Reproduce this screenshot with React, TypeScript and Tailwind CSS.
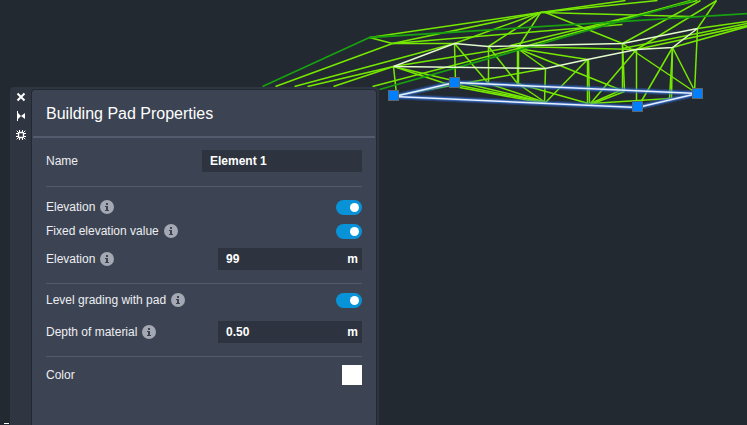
import React, { useState } from 'react';

const FONT = "font-['Liberation_Sans',Arial,sans-serif]";

type Line = [number, number, number, number];

const LIME_LINES: Line[] = [
  // long slopes running off to the left
  [275, 86, 392, 43],
  [294, 86, 454, 43],
  [307, 86, 393, 66],
  [333, 86, 393, 66],
  [372, 86, 517, 48],
  [369, 37, 392, 43],
  [369, 37, 540, 12],
  [392, 43, 540, 12],
  [392, 43, 454, 43],
  [392, 43, 622, 24],
  [454, 43, 540, 12],
  [488, 46, 540, 12],
  [517, 48, 540, 12],
  [393, 66, 517, 46],
  // top ridge
  [540, 12, 625, 0],
  [540, 12, 657, 0],
  [540, 12, 690, 16],
  [545, 12, 622, 43],
  [510, 45, 697, 0],
  [517, 48, 690, 0],
  [622, 43, 700, 0],
  [636, 49, 716, 0],
  [697, 28, 716, 0],
  [697, 28, 747, 21],
  [622, 48, 747, 23],
  [636, 49, 747, 25],
  [672, 47, 747, 26],
  [517, 46, 636, 49],
  // slopes down to the pad
  [393, 66, 396, 94],
  [393, 66, 545, 102],
  [393, 66, 454, 86],
  [454, 84, 545, 102],
  [454, 86, 545, 103],
  [395, 95, 545, 68],
  [454, 43, 455, 82],
  [454, 43, 488, 83],
  [488, 46, 488, 83],
  [488, 46, 517, 83],
  [517, 48, 517, 83],
  [518, 48, 518, 83],
  [488, 83, 545, 102],
  [517, 83, 545, 102],
  [517, 83, 588, 103],
  [517, 48, 545, 68],
  [517, 48, 587, 59],
  [517, 48, 624, 91],
  [545, 68, 544, 102],
  [587, 59, 545, 102],
  [587, 59, 587, 103],
  [588, 59, 589, 103],
  [636, 49, 590, 103],
  [622, 43, 622, 90],
  [622, 43, 624, 90],
  [622, 43, 695, 92],
  [636, 49, 636, 104],
  [672, 47, 669, 98],
  [672, 47, 671, 98],
  [672, 47, 639, 104],
  [672, 47, 695, 92],
  [697, 28, 694, 92],
  [590, 103, 622, 89],
  [590, 104, 624, 91],
  [590, 103, 670, 98],
];

const GREEN_LINES: Line[] = [
  [262, 86, 369, 37],
  [369, 37, 747, 13],
  [379, 89, 693, 0],
];

const GRIPS = [
  { x: 393, y: 95 },
  { x: 454, y: 82 },
  { x: 697, y: 93 },
  { x: 637, y: 106 },
];

const PAD_POINTS = '394,96 454,82 697,93 637,107';

const Wireframe: React.FC = () => (
  <svg
    className="absolute left-0 top-0"
    width="747"
    height="130"
    viewBox="0 0 747 130"
    fill="none"
    aria-hidden="true"
  >
    <g transform="translate(0.5 0.5)">
      <g stroke="#76e900" strokeWidth="1.5">
        {LIME_LINES.map(([x1, y1, x2, y2], i) => (
          <line key={i} x1={x1} y1={y1} x2={x2} y2={y2} />
        ))}
      </g>
      <g stroke="#18a010" strokeWidth="1.8">
        {GREEN_LINES.map(([x1, y1, x2, y2], i) => (
          <line key={i} x1={x1} y1={y1} x2={x2} y2={y2} />
        ))}
      </g>
      <polygon
        points="393,66 454,43 488,46 622,43 697,28 672,47 636,49 587,59 545,68"
        stroke="#e4fbd0"
        strokeWidth="1.4"
      />
      <polygon points={PAD_POINTS} stroke="#2b66cf" strokeOpacity="0.35" strokeWidth="6" />
      <polygon points={PAD_POINTS} stroke="#3f7be0" strokeOpacity="0.6" strokeWidth="3.5" />
      <polygon points={PAD_POINTS} stroke="#e6f0ff" strokeWidth="1.5" />
      {GRIPS.map(({ x, y }) => (
        <rect
          key={`${x}-${y}`}
          x={x - 5}
          y={y - 5}
          width="10"
          height="10"
          fill="#007fff"
          stroke="#5c6670"
        />
      ))}
    </g>
  </svg>
);

const InfoIcon: React.FC = () => (
  <svg width="14" height="14" viewBox="0 0 14 14" aria-hidden="true">
    <circle cx="7" cy="7" r="7" fill="#a3a8b3" />
    <path d="M6 3h2v2H6zM5 6h3v4h1v1H5v-1h1V7H5z" fill="#3c4453" />
  </svg>
);

const CloseIcon: React.FC = () => (
  <svg width="10" height="10" viewBox="0 0 10 10" aria-hidden="true">
    <path d="M1.5 1.5l7 7M8.5 1.5l-7 7" stroke="#fff" strokeWidth="2" />
  </svg>
);

const AutoHideIcon: React.FC = () => (
  <svg width="10" height="10" viewBox="0 0 10 10" fill="#fff" aria-hidden="true">
    <path d="M1 0h1v10H1zM2 2l3 3-3 3zM9 2v6L5 5z" />
  </svg>
);

const GearIcon: React.FC = () => (
  <svg width="10" height="10" viewBox="0 0 10 10" fill="none" stroke="#fff" aria-hidden="true">
    <rect x="2.5" y="2.5" width="5" height="5" rx="1" strokeWidth="1.4" />
    <path
      d="M3.5 0v2.5M6.5 0v2.5M3.5 7.5V10M6.5 7.5V10M0 3.5h2.5M0 6.5h2.5M7.5 3.5H10M7.5 6.5H10M.7 .7l2 2M7.3 7.3l2 2M9.3 .7l-2 2M2.7 7.3l-2 2"
      strokeWidth="1"
    />
  </svg>
);

interface FieldLabelProps {
  htmlFor: string;
  info?: boolean;
  children: React.ReactNode;
}

const FieldLabel: React.FC<FieldLabelProps> = ({ htmlFor, info, children }) => (
  <div className="flex items-center gap-[5px]">
    <label htmlFor={htmlFor}>{children}</label>
    {info && <InfoIcon />}
  </div>
);

interface ToggleRowProps {
  id: string;
  label: string;
}

const ToggleRow: React.FC<ToggleRowProps> = ({ id, label }) => {
  const [on, setOn] = useState(true);

  return (
    <div className="flex h-6 items-center justify-between">
      <FieldLabel htmlFor={id} info>
        {label}
      </FieldLabel>
      <input
        id={id}
        type="checkbox"
        role="switch"
        checked={on}
        onChange={() => setOn(!on)}
        className="flex h-[15px] w-[26px] appearance-none items-center rounded-full bg-[#6b7280] px-[3px] before:block before:size-[9px] before:rounded-full before:bg-white checked:justify-end checked:bg-[#0893d8]"
      />
    </div>
  );
};

interface UnitRowProps {
  id: string;
  label: string;
  value: string;
  unit: string;
}

const UnitRow: React.FC<UnitRowProps> = ({ id, label, value, unit }) => (
  <div className="flex h-[22px] items-center justify-between">
    <FieldLabel htmlFor={id} info>
      {label}
    </FieldLabel>
    <div className="flex h-full w-36 items-center bg-[#2d343f] pl-2 pr-1 font-bold text-white">
      <input id={id} defaultValue={value} className="min-w-0 flex-1 bg-transparent outline-none" />
      <span>{unit}</span>
    </div>
  </div>
);

export default function App() {
  return (
    <main className={`relative min-h-screen overflow-hidden bg-[#222930] text-xs text-[#eceef1] ${FONT}`}>
      <Wireframe />
      <div className="absolute bottom-px left-1 h-px w-[5px] bg-white" />

      {/* Properties palette */}
      <section className="absolute bottom-0 left-[10px] top-[87px] flex w-[369px] rounded-t-sm bg-[#2f3541]">
        <div className="flex w-[21px] flex-col items-center gap-[9px] pt-[5px]">
          <button type="button" aria-label="Close">
            <CloseIcon />
          </button>
          <button type="button" aria-label="Auto-hide">
            <AutoHideIcon />
          </button>
          <button type="button" aria-label="Properties">
            <GearIcon />
          </button>
        </div>

        <div className="mr-0.5 mt-0.5 flex-1 rounded-t-sm border-x border-t border-[#232932] bg-[#3c4453]">
          <header className="mx-px flex h-12 items-center border-b-2 border-[#535c6e] px-[13px] pt-0.5">
            <h1 className="text-base text-white">Building Pad Properties</h1>
          </header>

          <div className="px-[14px]">
            <div className="border-b border-[#535b69] pb-[14px] pt-3">
              <div className="flex h-[22px] items-center justify-between">
                <FieldLabel htmlFor="name">Name</FieldLabel>
                <input
                  id="name"
                  defaultValue="Element 1"
                  className="h-full w-40 bg-[#2d343f] px-2 font-bold text-white outline-none"
                />
              </div>
            </div>

            <div className="border-b border-[#535b69] pb-[13px] pt-2">
              <ToggleRow id="elevation-on" label="Elevation" />
              <ToggleRow id="fixed-elevation" label="Fixed elevation value" />
              <div className="pt-[5px]">
                <UnitRow id="elevation" label="Elevation" value="99" unit="m" />
              </div>
            </div>

            <div className="border-b border-[#535b69] pb-[13px] pt-1">
              <ToggleRow id="level-grading" label="Level grading with pad" />
              <div className="pt-[9px]">
                <UnitRow id="depth" label="Depth of material" value="0.50" unit="m" />
              </div>
            </div>

            <div className="flex items-center justify-between pt-2">
              <FieldLabel htmlFor="color">Color</FieldLabel>
              <button id="color" type="button" aria-label="Color" className="size-5 bg-white" />
            </div>
          </div>
        </div>
      </section>
    </main>
  );
}
